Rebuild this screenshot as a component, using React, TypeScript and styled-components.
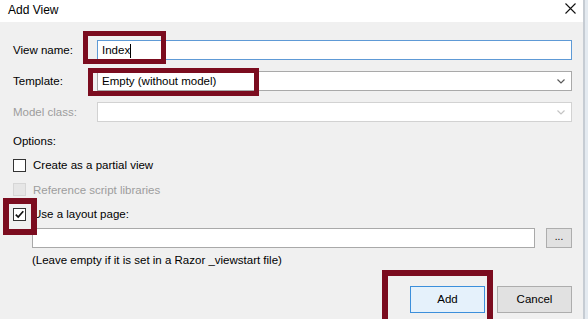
import React from "react";
import styled, { createGlobalStyle } from "styled-components";

const Global = createGlobalStyle`
  html, body { margin: 0; padding: 0; background: #f0f0f0; }
  body { font-family: "Liberation Sans", Arial, sans-serif; }
  * { box-sizing: border-box; }
`;

const Window = styled.div`
  position: relative;
  width: 588px;
  height: 319px;
  overflow: hidden;
  display: flex;
  background: #e4eaf0;
  padding-right: 3px;
`;

const Main = styled.div`
  flex: 1;
  display: flex;
  flex-direction: column;
  border-right: 2px solid #c6ccd3;
  background: #f0f0f0;
`;

const TitleBar = styled.div`
  height: 22px;
  background: #ffffff;
  display: flex;
  align-items: center;
  justify-content: space-between;
  padding: 0 7px 2px 8px;
`;

const Title = styled.span`
  font-size: 12px;
  color: #000;
`;

const CloseIcon = styled.svg`
  width: 11px;
  height: 11px;
  margin-top: -3px;
`;

const Body = styled.div`
  flex: 1;
  padding: 18px 11px 0 13px;
  font-size: 11.5px;
  color: #000;
`;

const FieldGrid = styled.div`
  display: grid;
  grid-template-columns: 84px 1fr;
  row-gap: 11px;
  align-items: center;
`;

const Label = styled.label<{ $disabled?: boolean }>`
  line-height: 20px;
  color: ${(p) => (p.$disabled ? "#9d9d9d" : "#000")};
`;

const TextBox = styled.div<{ $focused?: boolean; $disabled?: boolean }>`
  height: 20px;
  background: #fff;
  border: 1px solid
    ${(p) => (p.$focused ? "#5e9ad6" : p.$disabled ? "#d2d2d2" : "#a9a9a9")};
  display: flex;
  align-items: center;
  padding: 0 6px 0 4px;
  line-height: 18px;
`;

const Caret = styled.span`
  display: inline-block;
  width: 1px;
  height: 14px;
  background: #000;
  vertical-align: middle;
  margin-left: 0;
`;

const SelectBox = styled(TextBox)`
  justify-content: space-between;
`;

const Chevron = styled.svg<{ $disabled?: boolean }>`
  width: 8px;
  height: 5px;
  stroke: ${(p) => (p.$disabled ? "#c4c4c4" : "#5a5a5a")};
`;

const SectionLabel = styled.div`
  margin-top: 11px;
  line-height: 16px;
`;

const CheckRow = styled.div<{ $disabled?: boolean }>`
  height: 24.5px;
  display: flex;
  align-items: center;
  gap: 7px;
  color: ${(p) => (p.$disabled ? "#9d9d9d" : "#000")};
  &:first-of-type {
    margin-top: 4px;
  }
`;

const CheckBox = styled.span<{ $disabled?: boolean }>`
  width: 13px;
  height: 13px;
  flex: none;
  border: 1px solid ${(p) => (p.$disabled ? "#d6d6d6" : "#333")};
  background: ${(p) => (p.$disabled ? "#e6e6e6" : "#fff")};
  display: flex;
  align-items: center;
  justify-content: center;
`;

const CheckList = styled.div`
  display: flex;
  flex-direction: column;
`;

const PathRow = styled.div`
  display: flex;
  gap: 11px;
  margin: 1px 0 0 19px;
`;

const PathInput = styled(TextBox)`
  flex: 1;
`;

const SmallButton = styled.button`
  width: 26px;
  height: 20px;
  border: 1px solid #adadad;
  background: #e1e1e1;
  font-family: inherit;
  font-size: 10px;
  padding: 0 0 3px;
  color: #000;
`;

const Hint = styled.div`
  margin: 4px 0 0 19px;
  line-height: 16px;
`;

const ButtonRow = styled.div`
  display: flex;
  justify-content: flex-end;
  gap: 12px;
  margin-top: 18px;
`;

const DialogButton = styled.button<{ $primary?: boolean }>`
  width: 75px;
  height: 27px;
  font-family: inherit;
  font-size: 11.5px;
  color: #000;
  background: ${(p) => (p.$primary ? "#e5f1fb" : "#e1e1e1")};
  border: 1px solid ${(p) => (p.$primary ? "#3c8fdb" : "#adadad")};
  padding: 0;
`;

const Highlight = styled.div<{
  $x: number;
  $y: number;
  $w: number;
  $h: number;
  $t: number;
}>`
  position: absolute;
  left: ${(p) => p.$x}px;
  top: ${(p) => p.$y}px;
  width: ${(p) => p.$w}px;
  height: ${(p) => p.$h}px;
  border: ${(p) => p.$t}px solid #7b0c1f;
  pointer-events: none;
`;

const ChevronDown = ({ disabled }: { disabled?: boolean }) => (
  <Chevron $disabled={disabled} viewBox="0 0 8 5" fill="none" strokeWidth="1.2">
    <path d="M0.5 0.5 L4 4 L7.5 0.5" />
  </Chevron>
);

export default function App() {
  return (
    <>
      <Global />
      <Window>
        <Main>
          <TitleBar>
            <Title>Add View</Title>
            <CloseIcon viewBox="0 0 11 11" fill="none" stroke="#111" strokeWidth="1.1">
              <path d="M0.5 0.5 L10.5 10.5 M10.5 0.5 L0.5 10.5" />
            </CloseIcon>
          </TitleBar>
          <Body>
            <FieldGrid>
              <Label>View name:</Label>
              <TextBox $focused>
                <span>
                  Index
                  <Caret />
                </span>
              </TextBox>
              <Label>Template:</Label>
              <SelectBox>
                <span>Empty (without model)</span>
                <ChevronDown />
              </SelectBox>
              <Label $disabled>Model class:</Label>
              <SelectBox $disabled>
                <span />
                <ChevronDown disabled />
              </SelectBox>
            </FieldGrid>
            <SectionLabel>Options:</SectionLabel>
            <CheckList>
              <CheckRow>
                <CheckBox />
                <span>Create as a partial view</span>
              </CheckRow>
              <CheckRow $disabled>
                <CheckBox $disabled />
                <span>Reference script libraries</span>
              </CheckRow>
              <CheckRow>
                <CheckBox>
                  <svg width="11" height="11" viewBox="0 0 11 11" fill="none">
                    <path d="M1.8 5.6 L4.2 8 L9.3 2.3" stroke="#111" strokeWidth="1.7" />
                  </svg>
                </CheckBox>
                <span>Use a layout page:</span>
              </CheckRow>
            </CheckList>
            <PathRow>
              <PathInput />
              <SmallButton>...</SmallButton>
            </PathRow>
            <Hint>(Leave empty if it is set in a Razor _viewstart file)</Hint>
            <ButtonRow>
              <DialogButton $primary>Add</DialogButton>
              <DialogButton>Cancel</DialogButton>
            </ButtonRow>
          </Body>
        </Main>
        <Highlight $x={83} $y={31} $w={83} $h={33} $t={5} />
        <Highlight $x={88} $y={68} $w={171} $h={28} $t={5} />
        <Highlight $x={3} $y={198} $w={34} $h={37} $t={6} />
        <Highlight $x={382} $y={270} $w={111} $h={60} $t={6} />
      </Window>
    </>
  );
}
